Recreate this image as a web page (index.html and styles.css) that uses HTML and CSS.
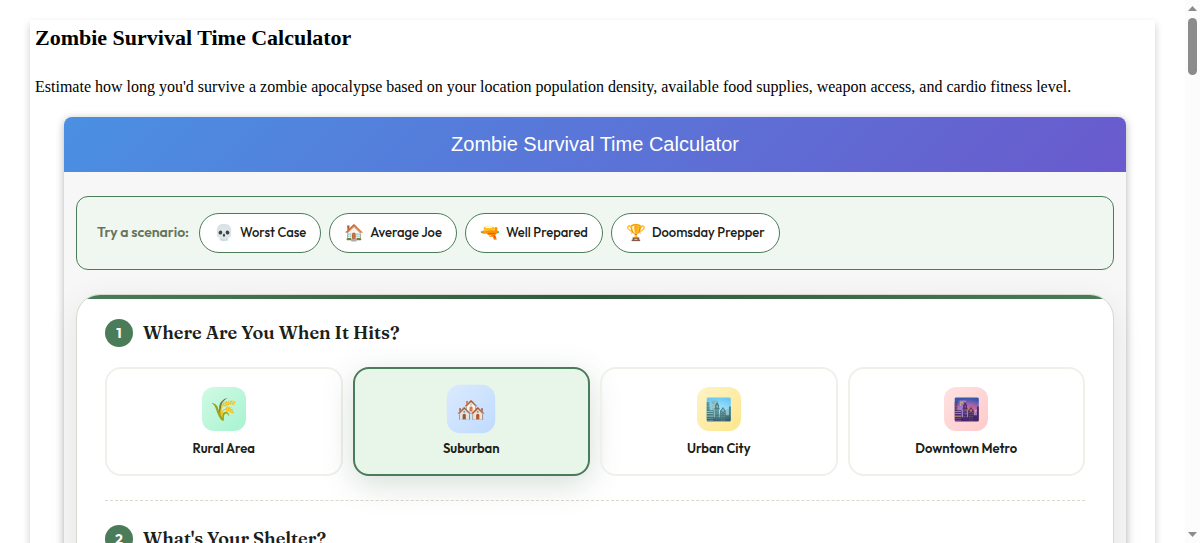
FILE: index.html
```html
<!DOCTYPE html>
<html lang="en">
<head>
  <meta charset="UTF-8">
  <meta name="viewport" content="width=device-width, initial-scale=1.0">
  <title>Zombie Survival Time Calculator</title>
  <link rel="stylesheet" href="styles.css">
</head>
<body>

  <div class="viewport">
    <main class="page">
      <h1>Zombie Survival Time Calculator</h1>
      <p class="intro">Estimate how long you'd survive a zombie apocalypse based on your location population density, available food supplies, weapon access, and cardio fitness level.</p>

      <div class="calculator">
        <div class="calc-header">Zombie Survival Time Calculator</div>
        <div class="calc-body">

          <!-- Scenarios -->
          <div class="scenarios">
            <span class="scenario-label">Try a scenario:</span>
            <button type="button" class="scenario-btn"><span class="emoji">💀</span>Worst Case</button>
            <button type="button" class="scenario-btn"><span class="emoji">🏠</span>Average Joe</button>
            <button type="button" class="scenario-btn"><span class="emoji">🔫</span>Well Prepared</button>
            <button type="button" class="scenario-btn"><span class="emoji">🏆</span>Doomsday Prepper</button>
          </div>

          <form class="form-card">
            <!-- Location -->
            <section class="question">
              <h2><span class="number">1</span>Where Are You When It Hits?</h2>
              <div class="options">
                <label class="option">
                  <input type="radio" name="location" value="rural">
                  <span class="option-icon rural">🌾</span>
                  <span>Rural Area</span>
                </label>
                <label class="option">
                  <input type="radio" name="location" value="suburban" checked>
                  <span class="option-icon suburban">🏘️</span>
                  <span>Suburban</span>
                </label>
                <label class="option">
                  <input type="radio" name="location" value="urban">
                  <span class="option-icon urban">🏙️</span>
                  <span>Urban City</span>
                </label>
                <label class="option">
                  <input type="radio" name="location" value="downtown">
                  <span class="option-icon downtown">🌆</span>
                  <span>Downtown Metro</span>
                </label>
              </div>
            </section>

            <!-- Shelter -->
            <section class="question">
              <h2><span class="number">2</span>What's Your Shelter?</h2>
            </section>
          </form>

        </div>
      </div>
    </main>
  </div>

  <div class="scrollbar" aria-hidden="true">
    <svg width="9" height="5" viewBox="0 0 9 5"><path d="M0 5 4.500 0 9 5z" fill="#8b8b8b"/></svg>
    <div class="thumb"></div>
    <svg width="9" height="5" viewBox="0 0 9 5"><path d="M0 0 4.500 5 9 0z" fill="#8b8b8b"/></svg>
  </div>

</body>
</html>
```

FILE: styles.css
```css
* {
  box-sizing: border-box;
}

body {
  margin: 0;
  height: 100vh;
  display: flex;
  overflow: hidden;
  background: #fff;
  font-family: "Liberation Serif", "Times New Roman", serif;
}

.viewport {
  flex: 1;
  min-width: 0;
  overflow: hidden;
}

.page {
  margin: 20px 30px;
  padding: 5px;
  box-shadow: 0 4px 8px rgba(0, 0, 0, 0.2);
}

h1 {
  margin: 0;
  font-size: 22px;
  line-height: 26px;
}

.intro {
  margin: 26px 0 20px;
  font-size: 16px;
  line-height: 20px;
}

.calculator {
  margin: 0 24px 0 29px;
  border-radius: 8px;
  background: #f7f7f7;
  box-shadow: 0 2px 8px rgba(0, 0, 0, 0.3);
}

.calc-header {
  padding: 15px;
  border-radius: 8px 8px 0 0;
  background: linear-gradient(135deg, #4a90e2, #6a5acd);
  color: #fff;
  font-family: "Liberation Sans", Arial, sans-serif;
  font-size: 20px;
  line-height: 25px;
  text-align: center;
}

.calc-body {
  padding: 24px 12px;
  color: #1a2118;
  font-family: Outfit, Lato, sans-serif;
}

.scenarios {
  display: flex;
  flex-wrap: wrap;
  align-items: center;
  gap: 8px;
  padding: 16px 20px;
  border: 1px solid #4a7c59;
  border-radius: 12px;
  background: #f0f7f1;
}

.scenario-label {
  margin-right: 2px;
  padding-bottom: 2px;
  color: #66755a;
  font-size: 14px;
  font-weight: 600;
  line-height: 16px;
}

.scenario-btn {
  display: flex;
  align-items: center;
  gap: 6px;
  height: 40px;
  padding: 0 14px 2px;
  border: 1px solid #4a7c59;
  border-radius: 20px;
  background: #fff;
  color: #1a2118;
  font-family: inherit;
  font-size: 13px;
  font-weight: 500;
  cursor: pointer;
}

.emoji {
  font-size: 16px;
}

.form-card {
  margin-top: 24px;
  padding: 0 28px;
  overflow: hidden;
  border: 1px solid #d4dbcd;
  border-radius: 24px;
  background: #fff;
  box-shadow: 0 8px 32px rgba(0, 0, 0, 0.08);
}

.form-card::before {
  content: "";
  display: block;
  height: 4px;
  margin: 0 -28px;
  background: linear-gradient(90deg, #4a7c59, #2d5a3d, #4a7c59);
}

.question {
  padding: 20px 0 24px;
}

.question + .question {
  padding-top: 24px;
  border-top: 1px dashed #d8d8cc;
}

h2 {
  display: flex;
  align-items: center;
  gap: 10px;
  margin: 0 0 20px;
  font-family: Fraunces, "Liberation Serif", serif;
  font-size: 18px;
  font-weight: 650;
  line-height: 28px;
}

.number {
  width: 28px;
  height: 28px;
  border-radius: 50%;
  background: #4a7c59;
  color: #fff;
  font-family: Outfit, Lato, sans-serif;
  font-size: 14px;
  font-weight: 700;
  text-align: center;
}

.options {
  display: grid;
  grid-template-columns: repeat(4, 1fr);
  gap: 10px;
}

.option {
  display: flex;
  flex-direction: column;
  align-items: center;
  gap: 10px;
  padding: 18px 12px;
  border: 2px solid #f0f0eb;
  border-radius: 16px;
  font-size: 13px;
  font-weight: 600;
  line-height: 15px;
  cursor: pointer;
}

.option input {
  appearance: none;
  width: 0;
  height: 0;
  margin: 0 0 -10px;
}

.option:has(input:checked) {
  border-color: #4a7c59;
  background: #e8f5e9;
  box-shadow: 0 8px 32px rgba(45, 90, 61, 0.2);
}

.option-icon {
  display: flex;
  align-items: center;
  justify-content: center;
  width: 44px;
  height: 44px;
  border-radius: 12px;
  font-size: 22px;
}

.option input:checked + .option-icon {
  transform: scale(1.1);
}

.rural {
  background: linear-gradient(135deg, #d1fae5, #a7f3d0);
}

.suburban {
  background: linear-gradient(135deg, #dbeafe, #bfdbfe);
}

.urban {
  background: linear-gradient(135deg, #fef3c7, #fde68a);
}

.downtown {
  background: linear-gradient(135deg, #fee2e2, #fecaca);
}

.scrollbar {
  display: flex;
  flex-direction: column;
  align-items: center;
  width: 15px;
  padding: 6px 0;
  background: #fcfcfc;
}

.thumb {
  width: 9px;
  height: 57px;
  margin: 7px 0 auto;
  border-radius: 5px;
  background: #8b8b8b;
}
```
